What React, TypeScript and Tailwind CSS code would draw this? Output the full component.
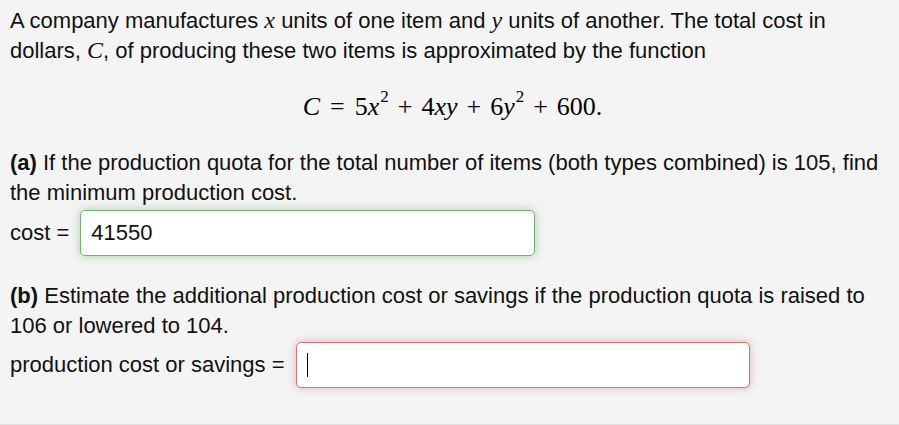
import React from 'react';

const V = ({ children }: { children: React.ReactNode }) => (
  <span className="italic font-['Liberation_Serif',serif] text-[24px] leading-none">{children}</span>
);

export default function App() {
  return (
    <div className="w-[899px] h-[425px] bg-[#f4f4f4] border-b border-[#e0e0e0] font-['Liberation_Sans',Arial,sans-serif] text-[22px] leading-[30px] text-[#111] pl-[10px] pr-[10px] pt-[6px] whitespace-nowrap">
      <p>
        A company manufactures <V>x</V> units of one item and <V>y</V> units of another. The total cost in
        <br />
        dollars, <V>C</V>, of producing these two items is approximated by the function
      </p>

      <div className="h-[82px] flex items-center justify-center font-['Liberation_Serif',serif] text-[26px] text-black pl-[6px]">
        <span className="italic">C</span>
        <span className="mx-[10px]">=</span>
        <span>5</span>
        <span className="italic">x</span>
        <sup className="text-[17px] -top-[0.6em] ml-[1px]">2</sup>
        <span className="mx-[9px]">+</span>
        <span>4</span>
        <span className="italic">xy</span>
        <span className="mx-[9px]">+</span>
        <span>6</span>
        <span className="italic">y</span>
        <sup className="text-[17px] -top-[0.6em] ml-[1px]">2</sup>
        <span className="mx-[9px]">+</span>
        <span>600.</span>
      </div>

      <p>
        <b>(a)</b> If the production quota for the total number of items (both types combined) is 105, find
        <br />
        the minimum production cost.
      </p>
      <div className="flex items-center mt-[2px] h-[46px]">
        <span className="mr-[11px]">cost =</span>
        <div className="w-[455px] h-[46px] bg-white border border-[#72b472] rounded-[5px] shadow-[0_0_8px_rgba(92,170,92,0.5)] flex items-center px-[10px]">
          41550
        </div>
      </div>

      <p className="mt-[25px]">
        <b>(b)</b> Estimate the additional production cost or savings if the production quota is raised to
        <br />
        106 or lowered to 104.
      </p>
      <div className="flex items-center mt-[1px] h-[46px]">
        <span className="mr-[11px]">production cost or savings =</span>
        <div className="w-[454px] h-[46px] bg-white border border-[#d67272] rounded-[5px] shadow-[0_0_8px_rgba(210,110,110,0.5)] flex items-center px-[10px]">
          <span className="w-px h-[24px] bg-black" />
        </div>
      </div>
    </div>
  );
}
